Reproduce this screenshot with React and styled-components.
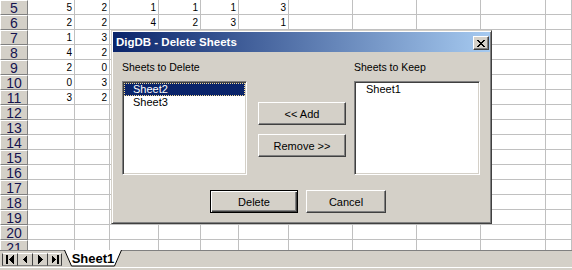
import React from 'react';
import styled, { createGlobalStyle, css } from 'styled-components';

const Global = createGlobalStyle`
  html, body { margin: 0; padding: 0; background: #fff; overflow: hidden; }
  #root { width: 572px; height: 270px; }
`;

const Screen = styled.div`
  position: relative;
  width: 572px;
  height: 270px;
  overflow: hidden;
  display: flex;
  flex-direction: column;
  background: #fff;
  font-family: "Liberation Sans", Arial, sans-serif;
`;

const Sheet = styled.div`
  height: 250px;
  flex: none;
  overflow: hidden;
`;

const Row = styled.div`
  display: flex;
  height: 15px;
`;

const RowHead = styled.div`
  flex: none;
  width: 28px;
  height: 15px;
  box-sizing: border-box;
  background: #d4d0c8;
  border-top: 1px solid #fff;
  border-left: 1px solid #fff;
  border-bottom: 1px solid #808080;
  border-right: 1px solid #808080;
  font-size: 14px;
  line-height: 14px;
  text-align: center;
  color: #141450;
`;

const Cell = styled.div`
  flex: ${p => (p.$w ? 'none' : '1')};
  width: ${p => (p.$w ? `${p.$w}px` : 'auto')};
  height: 15px;
  box-sizing: border-box;
  border-right: 1px solid #c0c0c0;
  border-bottom: 1px solid #c0c0c0;
  font-size: 10px;
  line-height: 12px;
  padding: 2px 2px 0 0;
  text-align: right;
  color: #000;
`;

const Dialog = styled.div`
  position: absolute;
  left: 111px;
  top: 30px;
  width: 381px;
  height: 194px;
  box-sizing: border-box;
  background: #d4d0c8;
  border: 1px solid;
  border-color: #d4d0c8 #404040 #404040 #d4d0c8;
  box-shadow: inset 1px 1px #fff, inset -1px -1px #808080;
  padding: 1px;
  display: flex;
  flex-direction: column;
  font-size: 11px;
  color: #000;
`;

const TitleBar = styled.div`
  height: 20px;
  flex: none;
  display: flex;
  align-items: center;
  justify-content: space-between;
  padding: 0 1px 0 3px;
  background: linear-gradient(to right, #0a246a, #a6caf0);
`;

const Title = styled.div`
  color: #fff;
  font-weight: bold;
  font-size: 11.5px;
  line-height: 14px;
`;

const CloseBtn = styled.div`
  width: 16px;
  height: 14px;
  box-sizing: border-box;
  margin-top: 2px;
  background: #d4d0c8;
  border: 1px solid;
  border-color: #fff #404040 #404040 #fff;
  box-shadow: inset -1px -1px #808080;
  display: flex;
  align-items: center;
  justify-content: center;
`;

const Body = styled.div`
  padding: 9px 0 0 9px;
  display: flex;
  flex-direction: column;
`;

const Columns = styled.div`
  display: grid;
  grid-template-columns: 125px 11px 88px 8px 126px;
  grid-template-rows: 13px 94px;
  row-gap: 7px;
`;

const Label = styled.div`
  font-size: 10.5px;
  line-height: 13px;
  grid-column: ${p => p.$col};
  grid-row: 1;
  white-space: nowrap;
`;

const ListBox = styled.div`
  grid-column: ${p => p.$col};
  grid-row: 2;
  box-sizing: border-box;
  height: 94px;
  background: #fff;
  border: 1px solid;
  border-color: #808080 #fff #fff #808080;
  box-shadow: inset 1px 1px #404040, inset -1px -1px #d4d0c8;
  padding: 1px;
`;

const Item = styled.div`
  height: 13px;
  box-sizing: border-box;
  line-height: 11px;
  padding-left: ${p => p.$indent}px;
  border: 1px dotted ${p => (p.$sel ? '#f5db95' : 'transparent')};
  background: ${p => (p.$sel ? '#0a246a' : 'transparent')};
  color: ${p => (p.$sel ? '#fff' : '#000')};
  white-space: nowrap;
`;

const MidCol = styled.div`
  grid-column: 3;
  grid-row: 2;
  display: flex;
  flex-direction: column;
  gap: 9px;
  padding-top: 21px;
`;

const Btn = styled.div`
  box-sizing: border-box;
  width: ${p => p.$w}px;
  height: 23px;
  background: #d4d0c8;
  display: flex;
  align-items: center;
  justify-content: center;
  color: #000;
  white-space: nowrap;
  ${p =>
    p.$default
      ? css`
          border: 1px solid #000;
          box-shadow: inset 1px 1px #fff, inset -1px -1px #404040, inset -2px -2px #808080;
        `
      : css`
          border: 1px solid;
          border-color: #fff #404040 #404040 #fff;
          box-shadow: inset -1px -1px #808080;
        `}
`;

const Footer = styled.div`
  display: flex;
  gap: 8px;
  padding-left: 88px;
  margin-top: 15px;
`;

const TabBar = styled.div`
  height: 20px;
  flex: none;
  box-sizing: border-box;
  border-top: 1px solid #808080;
  background: linear-gradient(to bottom, #d4d0c8 16px, #fff 16px, #fff 17px, #d4d0c8 17px);
  display: flex;
  align-items: flex-start;
  padding: 2px 0 0 2px;
`;

const NavGroup = styled.div`
  display: flex;
`;

const NavBtn = styled.div`
  width: 15px;
  height: 13px;
  box-sizing: border-box;
  background: #d4d0c8;
  border-left: 1px solid #404040;
  border-top: 1px solid #fff;
  border-bottom: 1px solid #808080;
  display: flex;
  align-items: center;
  justify-content: center;
  &:last-child { border-right: 1px solid #404040; }
`;

const Tab = styled.div`
  position: relative;
  width: 58px;
  height: 16px;
  margin: -3px 0 0 2px;
  display: flex;
  align-items: center;
  justify-content: center;
  font-weight: bold;
  font-size: 13px;
  color: #000;
`;

const TabShape = styled.svg`
  position: absolute;
  left: 0;
  top: 0;
`;

const TabText = styled.span`
  position: relative;
  line-height: 14px;
  margin-top: 1px;
`;

const widths = [47, 35, 49, 42, 38, 50, 64, 64, 64, 65, 0];

const data = {
  5: [5, 2, 1, 1, 1, 3],
  6: [2, 2, 4, 2, 3, 1],
  7: [1, 3],
  8: [4, 2],
  9: [2, 0],
  10: [0, 3],
  11: [3, 2],
};

const rows = Array.from({ length: 17 }, (_, i) => i + 5);

const CloseGlyph = () => (
  <svg width="8" height="7" viewBox="0 0 8 7" shapeRendering="crispEdges">
    <path
      d="M0 0h2v1h-2zM6 0h2v1h-2zM1 1h2v1h-2zM5 1h2v1h-2zM2 2h4v1h-4zM3 3h2v1h-2zM2 4h4v1h-4zM1 5h2v1h-2zM5 5h2v1h-2zM0 6h2v1h-2zM6 6h2v1h-2z"
      fill="#000"
    />
  </svg>
);

const NavIcon = ({ dir, bar }) => (
  <svg width="8" height="9" viewBox="0 0 8 9" shapeRendering="crispEdges">
    {dir === 'left' ? (
      <>
        {bar && <rect x="0" y="0" width="2" height="9" fill="#000" />}
        <polygon points={bar ? '7.5,0 7.5,9 3,4.5' : '6,0 6,9 1.5,4.5'} fill="#000" />
      </>
    ) : (
      <>
        <polygon points={bar ? '0.5,0 0.5,9 5,4.5' : '2,0 2,9 6.5,4.5'} fill="#000" />
        {bar && <rect x="6" y="0" width="2" height="9" fill="#000" />}
      </>
    )}
  </svg>
);

export default function App() {
  return (
    <Screen>
      <Global />
      <Sheet>
        {rows.map(r => (
          <Row key={r}>
            <RowHead>{r}</RowHead>
            {widths.map((w, ci) => (
              <Cell key={ci} $w={w}>
                {data[r] && data[r][ci] !== undefined ? data[r][ci] : ''}
              </Cell>
            ))}
          </Row>
        ))}
      </Sheet>
      <TabBar>
        <NavGroup>
          <NavBtn><NavIcon dir="left" bar /></NavBtn>
          <NavBtn><NavIcon dir="left" /></NavBtn>
          <NavBtn><NavIcon dir="right" /></NavBtn>
          <NavBtn><NavIcon dir="right" bar /></NavBtn>
        </NavGroup>
        <Tab>
          <TabShape width="58" height="17" viewBox="0 0 58 17">
            <polygon points="0.5,0 57.5,0 50.5,16 7.5,16" fill="#fff" />
            <polyline points="0.5,0 7.5,16 50.5,16 57.5,0" fill="none" stroke="#000" strokeWidth="1" />
          </TabShape>
          <TabText>Sheet1</TabText>
        </Tab>
      </TabBar>

      <Dialog>
        <TitleBar>
          <Title>DigDB - Delete Sheets</Title>
          <CloseBtn><CloseGlyph /></CloseBtn>
        </TitleBar>
        <Body>
          <Columns>
            <Label $col={1}>Sheets to Delete</Label>
            <ListBox $col={1}>
              <Item $sel $indent={8}>Sheet2</Item>
              <Item $indent={8}>Sheet3</Item>
            </ListBox>
            <MidCol>
              <Btn $w={88}>&lt;&lt; Add</Btn>
              <Btn $w={88}>Remove &gt;&gt;</Btn>
            </MidCol>
            <Label $col={5}>Sheets to Keep</Label>
            <ListBox $col={5}>
              <Item $indent={9}>Sheet1</Item>
            </ListBox>
          </Columns>
          <Footer>
            <Btn $w={88} $default>Delete</Btn>
            <Btn $w={80}>Cancel</Btn>
          </Footer>
        </Body>
      </Dialog>
    </Screen>
  );
}
